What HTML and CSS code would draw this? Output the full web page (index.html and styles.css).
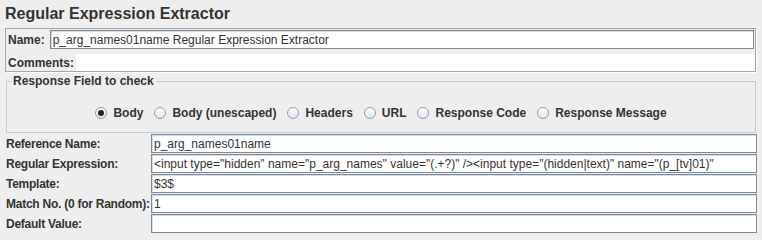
FILE: index.html
```html
<!DOCTYPE html>
<html lang="en">
<head>
    <meta charset="UTF-8">
    <title>Regular Expression Extractor</title>
    <link rel="stylesheet" href="styles.css">
</head>
<body>
    <div class="panel">
        <h1 class="title">Regular Expression Extractor</h1>

        <div class="name-box">
            <div class="name-row">
                <label for="name">Name:</label>
                <input type="text" id="name" class="field" value="p_arg_names01name Regular Expression Extractor">
            </div>
            <div class="comments-row">
                <label>Comments:</label>
                <div class="comments"></div>
            </div>
        </div>

        <fieldset class="response">
            <legend>Response Field to check</legend>
            <div class="radios">
                <label class="radio"><span class="dot checked"></span>Body</label>
                <label class="radio"><span class="dot"></span>Body (unescaped)</label>
                <label class="radio"><span class="dot"></span>Headers</label>
                <label class="radio"><span class="dot"></span>URL</label>
                <label class="radio"><span class="dot"></span>Response Code</label>
                <label class="radio"><span class="dot"></span>Response Message</label>
            </div>
        </fieldset>

        <div class="form-grid">
            <label for="ref">Reference Name:</label>
            <input type="text" id="ref" class="field" value="p_arg_names01name">

            <label for="regex">Regular Expression:</label>
            <input type="text" id="regex" class="field" value="&lt;input type=&quot;hidden&quot; name=&quot;p_arg_names&quot; value=&quot;(.+?)&quot; /&gt;&lt;input type=&quot;(hidden|text)&quot; name=&quot;(p_[tv]01)&quot;">

            <label for="tpl">Template:</label>
            <input type="text" id="tpl" class="field" value="$3$">

            <label for="match">Match No. (0 for Random):</label>
            <input type="text" id="match" class="field" value="1">

            <label for="def">Default Value:</label>
            <input type="text" id="def" class="field" value="">
        </div>
    </div>
</body>
</html>
```

FILE: styles.css
```css
/* JMeter style panel */
body {
    margin: 0;
    background-color: #eeeeee;
    font-family: 'Liberation Sans', Arial, sans-serif;
    font-size: 12px;
    color: #333333;
}
.panel {
    display: flex;
    flex-direction: column;
}
.title {
    margin: 0;
    padding: 5px 0 0 5px;
    height: 18px;
    font-size: 16px;
    font-weight: bold;
    line-height: 18px;
    color: #333333;
}
label {
    font-weight: bold;
    white-space: nowrap;
}
.field {
    box-sizing: border-box;
    height: 19px;
    margin: 0;
    padding: 0 2px;
    border: 1px solid #7a8a99;
    box-shadow: inset 1px 1px 0 #d6dde4;
    background-color: #fff;
    font-family: 'Liberation Sans', Arial, sans-serif;
    font-size: 12px;
    color: #333333;
    outline: none;
    min-width: 0;
}
.name-box {
    margin: 5px 6px 0 5px;
    padding: 1px 1px 0 1px;
    border: 1px solid #a5a5a5;
    box-shadow: 1px 1px 0 #fff;
}
.name-row {
    display: flex;
    align-items: center;
    gap: 5px;
}
.name-row .field {
    flex: 1;
}
.comments-row {
    display: flex;
    align-items: center;
    gap: 2px;
    margin-top: 5px;
    margin-right: -1px;
}
.comments {
    flex: 1;
    height: 17px;
    background-color: #fff;
}
.name-row label, .comments-row label {
    padding-left: 1px;
}
.response {
    margin: 2px 6px 0 6px;
    padding: 16px 0 11px 0;
    border: 1px solid #b8cfe5;
    min-width: 0;
}
.response legend {
    margin-left: 4px;
    padding: 0 2px;
    font-weight: bold;
    line-height: 15px;
}
.radios {
    display: flex;
    justify-content: center;
    align-items: center;
    gap: 11px;
    height: 16px;
}
.radio {
    display: flex;
    align-items: center;
    gap: 6px;
}
.dot {
    box-sizing: border-box;
    width: 12px;
    height: 12px;
    border-radius: 50%;
    border: 1px solid #8e9cab;
    background: linear-gradient(#ffffff, #dce6f0);
    display: flex;
    align-items: center;
    justify-content: center;
}
.dot.checked::after {
    content: '';
    width: 6px;
    height: 6px;
    border-radius: 50%;
    background-color: #222;
}
.form-grid {
    display: grid;
    grid-template-columns: 145px 1fr;
    grid-auto-rows: 19px;
    row-gap: 1px;
    align-items: center;
    margin: 1px 5px 0 6px;
}
.form-grid label {
    letter-spacing: -0.25px;
}
.form-grid .field {
    width: 100%;
}
```
